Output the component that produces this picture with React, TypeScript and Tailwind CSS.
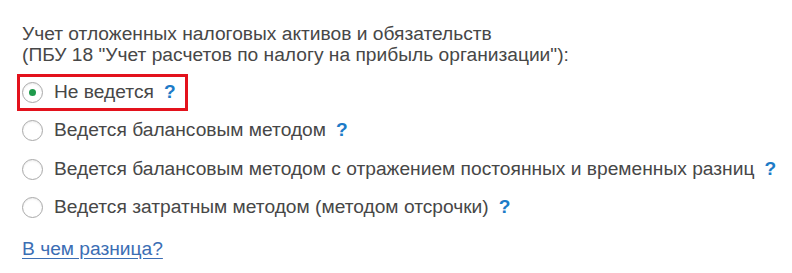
const options = [
  'Не ведется',
  'Ведется балансовым методом',
  'Ведется балансовым методом с отражением постоянных и временных разниц',
  'Ведется затратным методом (методом отсрочки)',
]

function Radio({ checked }: { checked: boolean }) {
  return (
    <span className="flex h-[21px] w-[21px] shrink-0 items-center justify-center rounded-full border-[1.5px] border-[#a9a9a9] bg-white shadow-[inset_0_1px_2px_rgba(0,0,0,0.08)]">
      {checked && <span className="h-[7px] w-[7px] rounded-full bg-[#1f9a4c]" />}
    </span>
  )
}

export default function App() {
  return (
    <div
      className="h-[273px] w-[792px] bg-white pl-[22px] pt-[23px] text-[19.2px] text-[#474747]"
      style={{ fontFamily: '"Liberation Sans", Arial, sans-serif' }}
    >
      <div className="leading-[21px]">
        <p>Учет отложенных налоговых активов и обязательств</p>
        <p>(ПБУ 18 "Учет расчетов по налогу на прибыль организации"):</p>
      </div>

      <div className="mt-[8px] flex flex-col">
        {options.map((label, i) => (
          <div key={label} className="flex h-[38.5px] items-center">
            <div
              className={
                i === 0
                  ? '-ml-[5px] flex h-[37px] items-center gap-[11px] border-[3px] border-[#e3121c] pl-[2px] pr-[9px]'
                  : 'flex items-center gap-[11px]'
              }
            >
              <Radio checked={i === 0} />
              <span className="flex items-center gap-[10px]">
                {label}
                <span className="font-bold text-[#1d7bc7]">?</span>
              </span>
            </div>
          </div>
        ))}
      </div>

      <a
        href="#"
        className="mt-[8px] inline-block text-[#3b6eb4] underline underline-offset-[3px]"
      >
        В чем разница?
      </a>
    </div>
  )
}
